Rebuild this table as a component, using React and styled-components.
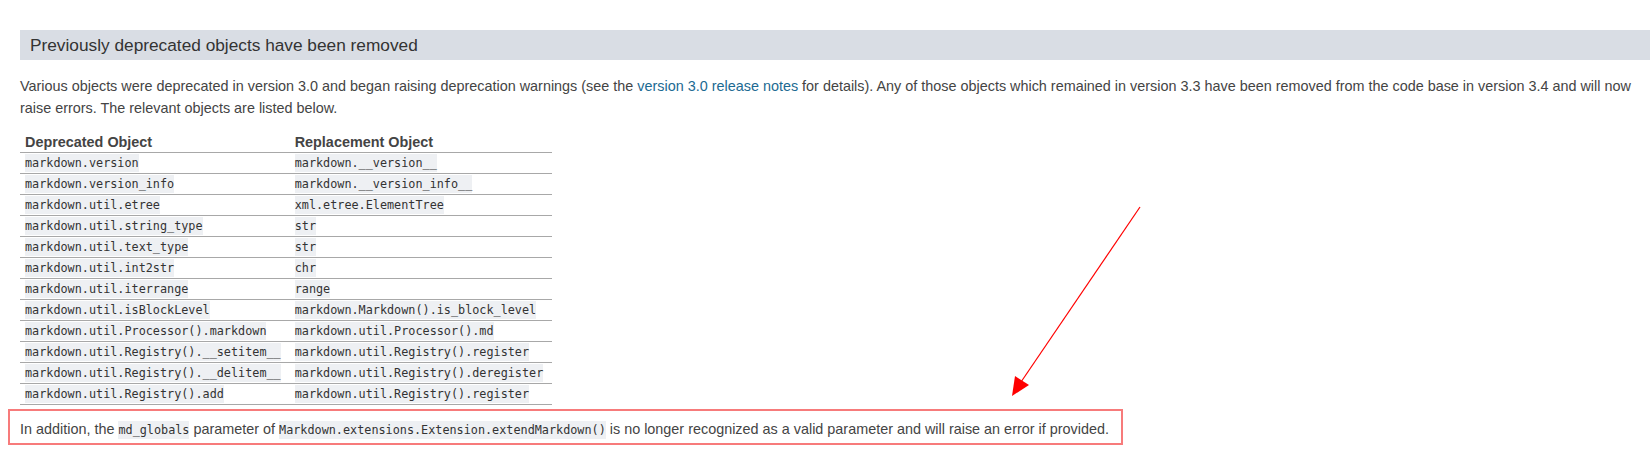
import React from "react";
import styled, { createGlobalStyle } from "styled-components";

const rows = [
    ["markdown.version", "markdown.__version__"],
    ["markdown.version_info", "markdown.__version_info__"],
    ["markdown.util.etree", "xml.etree.ElementTree"],
    ["markdown.util.string_type", "str"],
    ["markdown.util.text_type", "str"],
    ["markdown.util.int2str", "chr"],
    ["markdown.util.iterrange", "range"],
    ["markdown.util.isBlockLevel", "markdown.Markdown().is_block_level"],
    ["markdown.util.Processor().markdown", "markdown.util.Processor().md"],
    ["markdown.util.Registry().__setitem__", "markdown.util.Registry().register"],
    ["markdown.util.Registry().__delitem__", "markdown.util.Registry().deregister"],
    ["markdown.util.Registry().add", "markdown.util.Registry().register"],
];

const App = () => {
    return (
        <Page>
            <GlobalStyle />
            <Heading>Previously deprecated objects have been removed</Heading>
            <Paragraph>
                Various objects were deprecated in version 3.0 and began raising deprecation warnings (see the{" "}
                <Link href="#">version 3.0 release notes</Link> for details). Any of those objects which remained in
                version 3.3 have been removed from the code base in version 3.4 and will now raise errors. The relevant
                objects are listed below.
            </Paragraph>
            <Table>
                <thead>
                    <tr>
                        <Th>Deprecated Object</Th>
                        <Th>Replacement Object</Th>
                    </tr>
                </thead>
                <tbody>
                    {rows.map(([oldName, newName]) => (
                        <tr key={oldName}>
                            <Td><Code>{oldName}</Code></Td>
                            <Td><Code>{newName}</Code></Td>
                        </tr>
                    ))}
                </tbody>
            </Table>
            <Highlighted>
                In addition, the <Code>md_globals</Code> parameter of{" "}
                <Code>Markdown.extensions.Extension.extendMarkdown()</Code> is no longer recognized as a valid parameter
                and will raise an error if provided.
            </Highlighted>
            <Arrow width="1650" height="470" viewBox="0 0 1650 470">
                <line x1="1140" y1="207" x2="1021" y2="382" stroke="#ff0000" strokeWidth="1.2" />
                <polygon points="1012,396 1015,376 1029,385" fill="#ff0000" />
            </Arrow>
        </Page>
    );
};

export default App;

const GlobalStyle = createGlobalStyle`
    body {
        margin: 0;
        background: #ffffff;
        font-family: "Liberation Sans", Arial, sans-serif;
        font-size: 14.4px;
        color: #444444;
    }
`;

const Page = styled.div`
    position: relative;
    padding: 29.5px 0 0 20px;
    width: 1650px;
    height: 470px;
    box-sizing: border-box;
`;

const Heading = styled.h2`
    margin: 0;
    padding: 5px 10px;
    background: #d9dde4;
    font-size: 17.28px;
    font-weight: normal;
    line-height: 20.5px;
    color: #333333;
`;

const Paragraph = styled.p`
    margin: 16px 0 13px;
    line-height: 21.6px;
`;

const Link = styled.a`
    color: #1c6a92;
    text-decoration: none;
`;

const Table = styled.table`
    border-collapse: collapse;
    border-spacing: 0;
`;

const Th = styled.th`
    text-align: left;
    padding: 0 9px 0 5px;
    line-height: 20px;
    font-weight: bold;
    color: #444444;
    border-bottom: 1px solid #a8a8a8;
`;

const Td = styled.td`
    padding: 0 9px 0 5px;
    height: 20px;
    font-family: "DejaVu Sans Mono", monospace;
    font-size: 11.8px;
    line-height: 20px;
    border-bottom: 1px solid #a8a8a8;
    white-space: nowrap;
`;

const Code = styled.code`
    font-family: "DejaVu Sans Mono", monospace;
    font-size: 11.8px;
    line-height: 1;
    background: #eef0f3;
    padding: 2px 0;
    color: #333333;
`;

const Highlighted = styled.p`
    display: inline-block;
    margin: 4px 0 0 -12px;
    padding: 8px 12px 2px 10px;
    border: 2px solid #f77b7b;
    line-height: 21.6px;
`;

const Arrow = styled.svg`
    position: absolute;
    left: 0;
    top: 0;
    pointer-events: none;
`;
